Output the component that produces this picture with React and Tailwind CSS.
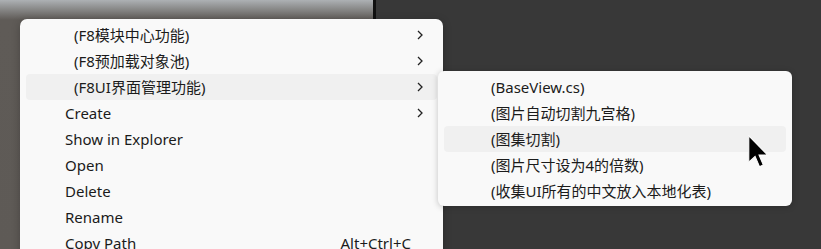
import React from 'react';

const mainItems = [
    { label: '(F8模块中心功能)', sub: true, indent: true },
    { label: '(F8预加载对象池)', sub: true, indent: true },
    { label: '(F8UI界面管理功能)', sub: true, indent: true, active: true },
    { label: 'Create', sub: true },
    { label: 'Show in Explorer' },
    { label: 'Open' },
    { label: 'Delete' },
    { label: 'Rename' },
    { label: 'Copy Path', shortcut: 'Alt+Ctrl+C' },
];

const subItems = [
    { label: '(BaseView.cs)' },
    { label: '(图片自动切割九宫格)' },
    { label: '(图集切割)', active: true },
    { label: '(图片尺寸设为4的倍数)' },
    { label: '(收集UI所有的中文放入本地化表)' },
];

const Chevron = () => (
    <svg width="8" height="10" viewBox="0 0 8 10" fill="none">
        <path d="M2 1 L6 5 L2 9" stroke="#222" strokeWidth="1.3" />
    </svg>
);

const Cursor = () => (
    <svg width="24" height="34" viewBox="0 0 13 20">
        <path d="M0.5 0.5 L0.5 16 L4.2 12.6 L6.8 18.6 L9 17.6 L6.5 11.8 L11.6 11.8 Z" fill="#000" stroke="#fff" strokeWidth="0.6" />
    </svg>
);

const App = () => {
    return (
        <div
            className="relative w-[821px] h-[249px] overflow-hidden flex text-[15px] text-[#1b1b1b]"
            style={{ fontFamily: '"Noto Sans", "Noto Sans CJK SC", sans-serif' }}
        >
            {/* desktop behind */}
            <div className="w-[373px] h-full bg-gradient-to-b from-[#adb1b4] via-[#5f5b57] via-[8%] to-[#5e5a56]" />
            <div className="w-[3px] h-full bg-[#111]" />
            <div className="flex-1 h-full bg-[#383838]" />

            {/* main context menu */}
            <div className="absolute left-[20px] top-[19px] w-[423px] h-[260px] bg-[#f9f9f9] rounded-[7px] shadow-[0_2px_8px_rgba(0,0,0,0.25)] pt-[3px]">
                {mainItems.map((item, i) => (
                    <div
                        key={i}
                        className={`mx-[6px] h-[26px] flex items-center rounded-[4px] pr-[13px] ${item.active ? 'bg-[#f0f0f0]' : ''} ${item.indent ? 'pl-[48px]' : 'pl-[39px]'}`}
                    >
                        <span className="flex-1 leading-none whitespace-nowrap">{item.label}</span>
                        {item.shortcut && <span className="leading-none mr-[13px]">{item.shortcut}</span>}
                        {item.sub && <Chevron />}
                    </div>
                ))}
            </div>

            {/* submenu */}
            <div className="absolute left-[438px] top-[71px] w-[354px] h-[135px] bg-[#f9f9f9] rounded-[6px] shadow-[0_1px_6px_rgba(0,0,0,0.22)] pt-[3px]">
                {subItems.map((item, i) => (
                    <div
                        key={i}
                        className={`mx-[6px] h-[26px] flex items-center rounded-[4px] pl-[47px] ${item.active ? 'bg-[#f0f0f0]' : ''}`}
                    >
                        <span className="leading-none whitespace-nowrap">{item.label}</span>
                    </div>
                ))}
            </div>

            <div className="absolute left-[747px] top-[135px]">
                <Cursor />
            </div>
        </div>
    );
};

export default App;
